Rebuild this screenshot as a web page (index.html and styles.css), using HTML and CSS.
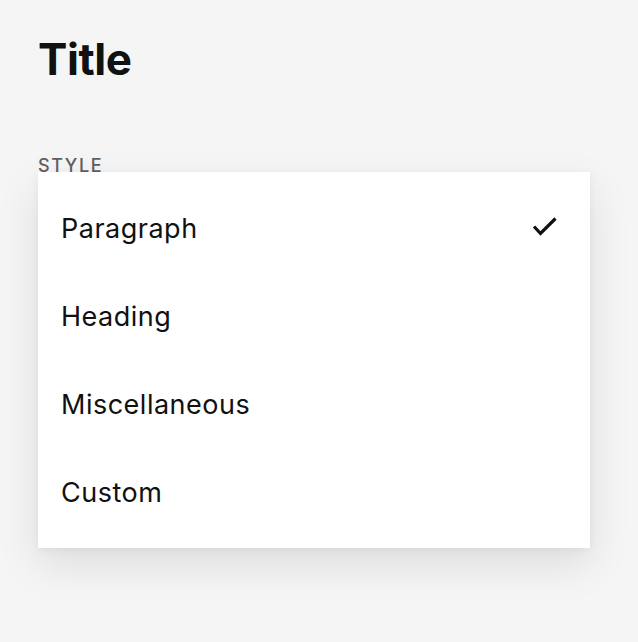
FILE: index.html
```html
<!DOCTYPE html>
<html>
<head>
<meta charset="utf-8">
<link rel="stylesheet" href="styles.css">
</head>
<body>
<div class="page">
  <h1 class="title">Title</h1>
  <div class="field">
    <div class="label">Style</div>
    <div class="select-box"></div>
    <ul class="menu">
      <li class="item selected"><span>Paragraph</span>
        <svg class="check" width="26" height="22" viewBox="0 0 26 22"><path d="M2 9.5 L8.5 16.5 L23.5 1.5" fill="none" stroke="#111" stroke-width="3.2" stroke-linecap="butt" stroke-linejoin="miter"/></svg>
      </li>
      <li class="item"><span>Heading</span></li>
      <li class="item"><span>Miscellaneous</span></li>
      <li class="item"><span>Custom</span></li>
    </ul>
  </div>
</div>
</body>
</html>
```
FILE: styles.css
```css
html, body {
  margin: 0;
  padding: 0;
  background: #f5f5f5;
  font-family: Inter, "Noto Sans", sans-serif;
  color: #111;
}
body {
  min-height: 642px;
}
.page {
  min-height: 642px;
  box-sizing: border-box;
  padding: 33px 38px 0 38px;
}
.title {
  margin: 0;
  font-size: 44px;
  line-height: 52px;
  font-weight: 700;
  letter-spacing: -0.4px;
}
.field {
  position: relative;
  margin-top: 71px;
}
.label {
  font-size: 18px;
  line-height: 20px;
  font-weight: 500;
  letter-spacing: 1.6px;
  text-transform: uppercase;
  color: #606060;
}
.select-box {
  height: 50px;
}
.menu {
  position: absolute;
  top: 16px;
  left: 0;
  width: 552px;
  margin: 0;
  padding: 12px 0;
  list-style: none;
  background: #fff;
  box-shadow: 0 16px 40px rgba(0,0,0,0.10), 0 2px 8px rgba(0,0,0,0.05);
}
.item {
  height: 88px;
  display: flex;
  align-items: center;
  justify-content: space-between;
  padding: 0 32px 0 23px;
  font-size: 27px;
  letter-spacing: 0.5px;
  font-weight: 400;
  color: #111;
}
.check {
  display: block;
  margin-top: 0;
}
```
